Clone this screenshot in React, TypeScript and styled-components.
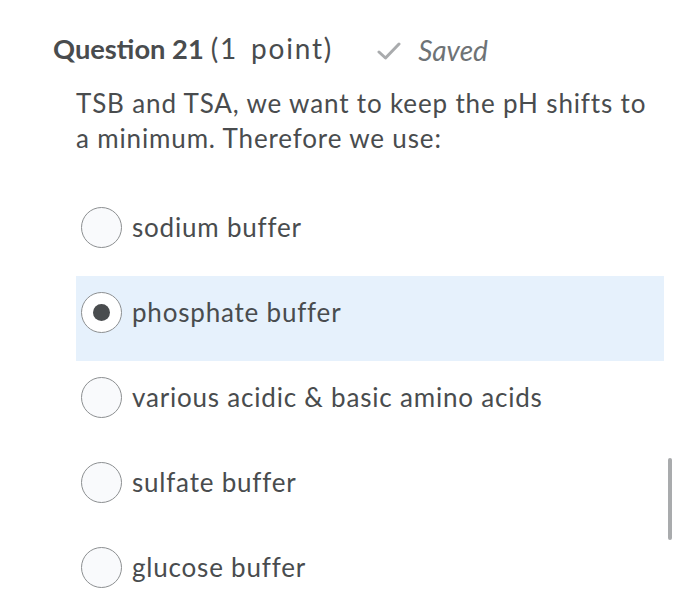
import React from "react";
import styled, { createGlobalStyle } from "styled-components";

const Global = createGlobalStyle`
  html, body { margin: 0; padding: 0; background: #ffffff; }
  body { font-family: Lato, "Open Sans", "Liberation Sans", sans-serif; color: #494c4e; }
  * { box-sizing: border-box; }
`;

const Page = styled.div`
  position: relative;
  width: 700px;
  height: 612px;
  overflow: hidden;
  padding: 31px 0 0 53px;
`;

const Header = styled.div`
  display: flex;
  align-items: baseline;
  height: 34px;
  line-height: 34px;
`;

const Title = styled.h2`
  margin: 0;
  font-size: 27.3px;
  font-weight: 700;
  color: #494c4e;
`;

const Points = styled.span`
  font-weight: 400;
  font-size: 28px;
  margin-left: 7px;
  word-spacing: 4px;
  letter-spacing: 1.8px;
`;

const Status = styled.div`
  display: flex;
  align-items: center;
  gap: 17px;
  margin-left: 44px;
  font-size: 28px;
  font-style: italic;
  color: #6e7376;
`;

const CheckIcon = styled.svg`
  width: 24px;
  height: 18px;
  align-self: center;
  position: relative;
  top: 1px;
`;

const Prompt = styled.p`
  margin: 21px 0 0 23px;
  width: 585px;
  font-size: 26px;
  letter-spacing: 0.85px;
  line-height: 35px;
`;

const Options = styled.div`
  display: flex;
  flex-direction: column;
  margin: 35px 0 0 23px;
  width: 588px;
`;

const Row = styled.label<{ $selected?: boolean }>`
  display: flex;
  align-items: flex-start;
  gap: 10px;
  height: 85px;
  padding: 16px 0 0 5px;
  background: ${(p) => (p.$selected ? "#e6f1fc" : "transparent")};
`;

const Radio = styled.span<{ $checked?: boolean }>`
  flex: none;
  width: 41px;
  height: 41px;
  border-radius: 50%;
  border: 1.6px solid #8c8f91;
  background: ${(p) => (p.$checked ? "#ffffff" : "#f9fafc")};
  display: flex;
  align-items: center;
  justify-content: center;
  &::after {
    content: "";
    display: ${(p) => (p.$checked ? "block" : "none")};
    width: 17px;
    height: 17px;
    border-radius: 50%;
    background: #494c4e;
  }
`;

const OptionText = styled.span`
  font-size: 26px;
  letter-spacing: 0.8px;
  line-height: 40px;
  color: #494c4e;
`;

const Scrollbar = styled.div`
  position: absolute;
  left: 668px;
  top: 458px;
  width: 4px;
  height: 82px;
  border-radius: 2px;
  background: #a9abad;
`;

const options = [
  "sodium buffer",
  "phosphate buffer",
  "various acidic & basic amino acids",
  "sulfate buffer",
  "glucose buffer",
];

export default function App() {
  const selected = 1;
  return (
    <>
      <Global />
      <Page>
        <Header>
          <Title>
            Question 21<Points>(1 point)</Points>
          </Title>
          <Status>
            <CheckIcon viewBox="0 0 24 18">
              <path
                d="M2 10 L8.5 16 L22 2"
                fill="none"
                stroke="#a9abad"
                strokeWidth="3"
                strokeLinecap="round"
                strokeLinejoin="round"
              />
            </CheckIcon>
            Saved
          </Status>
        </Header>
        <Prompt>
          TSB and TSA, we want to keep the pH shifts to a minimum. Therefore we use:
        </Prompt>
        <Options>
          {options.map((o, i) => (
            <Row key={o} $selected={i === selected}>
              <Radio $checked={i === selected} />
              <OptionText>{o}</OptionText>
            </Row>
          ))}
        </Options>
        <Scrollbar />
      </Page>
    </>
  );
}
